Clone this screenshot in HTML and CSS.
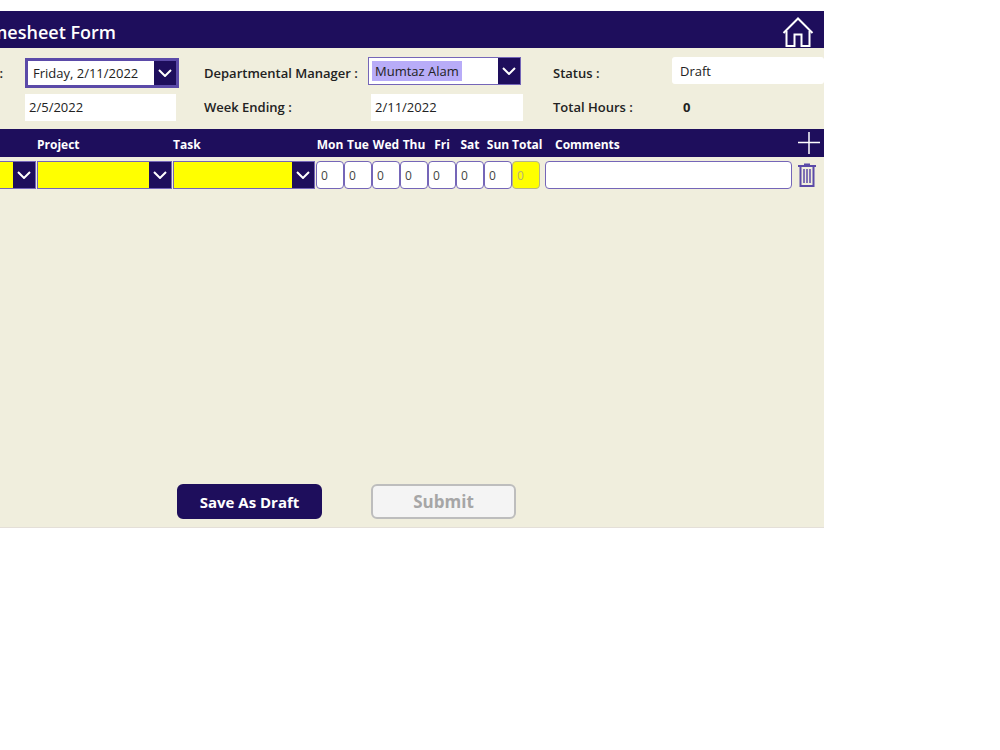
FILE: index.html
```html
<!DOCTYPE html>
<html lang="en">
<head>
    <meta charset="UTF-8">
    <meta name="viewport" content="width=device-width, initial-scale=1.0">
    <title>Timesheet Form</title>
    <link rel="stylesheet" href="styles.css">
</head>
<body>

    <form class="timesheet">
        <header class="title-bar">
            <h1>Timesheet Form</h1>
            <a class="home" href="#" aria-label="Home">
                <svg width="32" height="30" viewBox="0 0 32 30" fill="none" stroke="#fff" stroke-width="2">
                    <path d="M1.500 16 L16 1.500 L30.500 16"/>
                    <path d="M4.500 14 V29 H12.500 V17.500 H19.500 V29 H27.500 V14"/>
                </svg>
            </a>
        </header>

        <div class="info">
            <label class="first" for="date">:</label>
            <div class="picker date">
                <input type="text" id="date" value="Friday, 2/11/2022">
                <button type="button" class="arrow" aria-label="Open calendar">
                    <svg width="14" height="8" viewBox="0 0 14 8"><path d="M1 1l6 6 6-6"/></svg>
                </button>
            </div>
            <label for="manager">Departmental Manager :</label>
            <div class="picker manager">
                <select id="manager">
                    <option>Mumtaz Alam</option>
                </select>
                <span class="arrow">
                    <svg width="14" height="8" viewBox="0 0 14 8"><path d="M1 1l6 6 6-6"/></svg>
                </span>
            </div>
            <label class="last" for="status">Status :</label>
            <input class="field status" type="text" id="status" value="Draft" readonly>

            <label class="first" for="start"></label>
            <input class="field start" type="text" id="start" value="2/5/2022" aria-label="Week start" readonly>
            <label for="ending">Week Ending :</label>
            <input class="field ending" type="text" id="ending" value="2/11/2022" readonly>
            <label class="last" for="hours">Total Hours :</label>
            <output class="hours" id="hours">0</output>
        </div>

        <div class="entries">
            <table>
                <colgroup>
                    <col class="col-type">
                    <col class="col-project">
                    <col class="col-task">
                    <col class="col-day" span="8">
                    <col>
                    <col class="col-action">
                </colgroup>
                <thead>
                    <tr>
                        <th></th>
                        <th>Project</th>
                        <th>Task</th>
                        <th class="day">Mon</th>
                        <th class="day">Tue</th>
                        <th class="day">Wed</th>
                        <th class="day">Thu</th>
                        <th class="day">Fri</th>
                        <th class="day">Sat</th>
                        <th class="day">Sun</th>
                        <th class="day">Total</th>
                        <th class="comments">Comments</th>
                        <th class="action">
                            <button type="button" class="icon" aria-label="Add row">
                                <svg width="22" height="22" viewBox="0 0 22 22" stroke="#fff" stroke-width="1.500"><path d="M0 10.500h22M11 0v22"/></svg>
                            </button>
                        </th>
                    </tr>
                </thead>
                <tbody>
                    <tr>
                        <td>
                            <div class="picker required">
                                <select aria-label="Type"><option></option></select>
                                <span class="arrow"><svg width="14" height="8" viewBox="0 0 14 8"><path d="M1 1l6 6 6-6"/></svg></span>
                            </div>
                        </td>
                        <td>
                            <div class="picker required">
                                <select aria-label="Project"><option></option></select>
                                <span class="arrow"><svg width="14" height="8" viewBox="0 0 14 8"><path d="M1 1l6 6 6-6"/></svg></span>
                            </div>
                        </td>
                        <td>
                            <div class="picker required">
                                <select aria-label="Task"><option></option></select>
                                <span class="arrow"><svg width="14" height="8" viewBox="0 0 14 8"><path d="M1 1l6 6 6-6"/></svg></span>
                            </div>
                        </td>
                        <td><input class="box" type="text" value="0" aria-label="Mon"></td>
                        <td><input class="box" type="text" value="0" aria-label="Tue"></td>
                        <td><input class="box" type="text" value="0" aria-label="Wed"></td>
                        <td><input class="box" type="text" value="0" aria-label="Thu"></td>
                        <td><input class="box" type="text" value="0" aria-label="Fri"></td>
                        <td><input class="box" type="text" value="0" aria-label="Sat"></td>
                        <td><input class="box" type="text" value="0" aria-label="Sun"></td>
                        <td><input class="box total" type="text" value="0" aria-label="Total" disabled></td>
                        <td class="comments-cell"><input class="box" type="text" aria-label="Comments"></td>
                        <td class="action">
                            <button type="button" class="icon" aria-label="Delete row">
                                <svg width="18" height="24" viewBox="0 0 18 24" fill="none" stroke="#5b4aa8">
                                    <path stroke-width="2" d="M0 3h18M6 1.500h6M2.500 3v20h13V3"/>
                                    <path stroke-width="1.500" d="M6 6v14M9 6v14M12 6v14"/>
                                </svg>
                            </button>
                        </td>
                    </tr>
                </tbody>
            </table>
        </div>

        <div class="actions">
            <button type="submit" class="btn save">Save As Draft</button>
            <button type="button" class="btn" disabled>Submit</button>
        </div>
    </form>

</body>
</html>
```

FILE: styles.css
```css
* {
    box-sizing: border-box;
}
body {
    margin: 0;
    padding: 11px 17.6% 0 0;
    font-family: "Open Sans", "Noto Sans", sans-serif;
    font-size: 13px;
    color: #222;
    background-color: #fff;
    overflow-x: hidden;
}
input, select, button {
    font: inherit;
    color: inherit;
}
.timesheet {
    margin-left: -40px;
    background-color: #f0eedd;
    border-bottom: 1px solid #e4dfd8;
}
.title-bar {
    display: flex;
    align-items: center;
    justify-content: space-between;
    height: 37px;
    padding: 5px 10px 0 15px;
    background-color: #1e0e5c;
    color: #fff;
}
.title-bar h1 {
    margin: 0;
    font-size: 18px;
    font-weight: 600;
}
.home svg {
    display: block;
}

/* week details */
.info {
    display: grid;
    grid-template-columns: 65px minmax(0, 154fr) minmax(0, 189fr) minmax(0, 155fr) minmax(0, 149fr) minmax(0, 152fr);
    grid-template-rows: 32px 28px;
    row-gap: 4px;
    align-items: center;
    padding: 9px 0 8px;
}
.info label {
    padding-left: 25px;
    font-weight: 600;
    white-space: nowrap;
}
.info .first {
    padding-right: 22px;
    text-align: right;
}
.info .last {
    padding-left: 30px;
}
.field {
    width: 100%;
    height: 27px;
    padding: 0 4px;
    border: none;
    background-color: #fff;
}
.status {
    padding: 0 8px;
    border-radius: 3px;
    align-self: start;
}
.hours {
    padding-left: 11px;
    font-weight: 700;
}
.picker {
    display: flex;
    align-items: center;
    height: 28px;
    border: 1px solid #7566b8;
    background-color: #fff;
}
.picker input, .picker select {
    min-width: 0;
    border: none;
    background: none;
    appearance: none;
}
.picker input {
    flex: 1;
    padding: 0 5px;
}
.arrow {
    display: flex;
    align-items: center;
    justify-content: center;
    flex: none;
    align-self: stretch;
    width: 22px;
    margin-left: auto;
    padding: 0;
    border: none;
    background-color: #1e0e5c;
}
.arrow path {
    fill: none;
    stroke: #fff;
    stroke-width: 2;
}
.date {
    height: 30px;
    border: 3px solid #5b4aa8;
}
.manager {
    margin-right: 2px;
    align-self: start;
}
.manager select {
    margin-left: 3px;
    padding: 1px 3px;
    background-color: #b8acf8;
}
.start, .ending {
    width: calc(100% - 3px);
}
.ending {
    justify-self: end;
}

/* entries */
.entries {
    min-height: 355px;
}
table {
    width: 100%;
    table-layout: fixed;
    border-collapse: collapse;
}
.col-type {
    width: 77px;
}
.col-project {
    width: 136px;
}
.col-task {
    width: 143px;
}
.col-day {
    width: 28px;
}
.col-action {
    width: 30px;
}
th {
    height: 28px;
    padding: 2px 0 0;
    font-size: 12px;
    font-weight: 700;
    text-align: left;
    white-space: nowrap;
    color: #fff;
    background-color: #1e0e5c;
}
th.day {
    text-align: center;
}
th.comments {
    padding-left: 15px;
}
td {
    padding: 4px 0 0;
}
.required {
    margin-right: 1px;
    background-color: #ff0;
}
.required select {
    flex: 1;
}
.box {
    display: block;
    width: 100%;
    height: 28px;
    padding: 0 4px;
    border: 1px solid #7566b8;
    border-radius: 4px;
    background-color: #fff;
    font-size: 12px;
    color: #444;
}
.total {
    border-color: #b5b38c;
    background-color: #ff0;
    color: #b5b07a;
}
.comments-cell {
    padding: 4px 2px 0 5px;
}
th.action {
    padding: 0;
}
.icon {
    display: block;
    margin-left: 4px;
    padding: 0;
    border: none;
    background: none;
}
.icon svg {
    display: block;
}

.actions {
    display: flex;
    gap: 49px;
    padding: 0 0 8px 217px;
}
.btn {
    width: 145px;
    height: 35px;
    padding: 0;
    border: 2px solid #bdbdbd;
    border-radius: 6px;
    font-size: 17px;
    font-weight: 700;
    color: #a6a6a6;
    background-color: #f4f4f4;
}
.save {
    border-color: #1e0e5c;
    font-size: 15px;
    color: #fff;
    background-color: #1e0e5c;
}
```
